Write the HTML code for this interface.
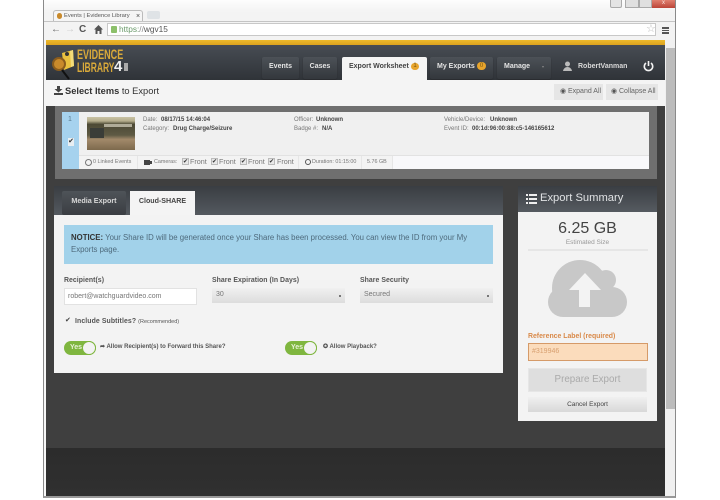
<!DOCTYPE html>
<html><head><meta charset="utf-8"><style>
html,body{margin:0;padding:0;width:720px;height:500px;overflow:hidden;background:#fff;font-family:"Liberation Sans",sans-serif}
div,svg{position:absolute;white-space:nowrap}
#w{left:0;top:0;width:720px;height:500px;filter:blur(.3px)}
.navbtn{height:22px;top:57px;background:linear-gradient(#4c5157,#33373c);color:#e4e4e4;font-size:7px;font-weight:bold;text-align:center;line-height:19px;border-radius:2px;box-shadow:0 1px 1px #2a2c2f}
.lab{color:#777;font-size:6px;line-height:9px}
.val{color:#444;font-size:6px;font-weight:bold;line-height:9px}
.foot{top:156px;height:13px;color:#777;font-size:5.4px;line-height:12px}
.fl{font-size:7.2px;color:#777;top:156px;line-height:12px}
.cb{width:6px;height:6px;background:#e8e8e8;border:1px solid #bbb;top:158px;box-sizing:content-box;color:#333;font-size:6px;line-height:6px;text-align:center;width:5px;height:5px}
.flabel{font-size:6.9px;font-weight:bold;color:#555;letter-spacing:.05px}
.select{top:288px;height:15px;background:linear-gradient(#f0f0f0,#dcdcdc);color:#777;font-size:7px;line-height:13px;padding-left:4px;box-sizing:border-box}
.tog{width:32px;height:14px;background:#7fb63f;border-radius:7px;top:341px;color:#e8f2d8;font-size:7px;font-weight:bold;line-height:14px;text-indent:6px}
.tog i{position:absolute;right:0;top:0;width:12px;height:12px;background:#f2f2f2;border:1px solid #7fb63f;border-radius:50%}
</style></head><body>
<div id="w">
<!-- browser window -->
<div style="left:43px;top:0;width:633px;height:498px;background:linear-gradient(#fdfdfd,#f3f3f3 12px,#f7f7f7);border-left:1px solid #8a8a8a;border-right:1px solid #8a8a8a;border-bottom:2px solid #999;box-sizing:border-box"></div>
<!-- window buttons -->
<div style="left:610px;top:0;width:12px;height:8px;border:1px solid #aaa;border-top:0;background:#e4e4e4;border-radius:0 0 2px 2px;box-sizing:border-box"></div>
<div style="left:625px;top:0;width:14px;height:8px;border:1px solid #aaa;border-top:0;background:#e0e0e0;box-sizing:border-box"></div>
<div style="left:639px;top:0;width:13px;height:8px;border:1px solid #aaa;border-top:0;background:#e0e0e0;box-sizing:border-box"></div>
<div style="left:652px;top:0;width:23px;height:8px;background:linear-gradient(#e08070,#bb4438);color:#f8e0dc;font-size:6px;line-height:7px;text-align:center">x</div>
<!-- tab -->
<div style="left:53px;top:10px;width:90px;height:12px;background:#f5f5f5;border:1px solid #bbb;border-bottom:0;border-radius:3px 3px 0 0;box-sizing:border-box"></div>
<div style="left:57px;top:13px;width:5px;height:6px;background:#c98a2b;border-radius:3px"></div>
<div style="left:64px;top:12px;font-size:5.800px;color:#555;line-height:9px">Events | Evidence Library</div>
<div style="left:136px;top:12px;font-size:7px;color:#444;line-height:9px">×</div>
<div style="left:147px;top:11px;width:13px;height:8px;background:#dfe3e6;border-radius:2px"></div>
<!-- toolbar -->
<div style="left:44px;top:21px;width:631px;height:1px;background:#c4c4c4"></div>
<div style="left:51px;top:24px;font-size:10px;font-weight:bold;color:#666;line-height:11px">←</div>
<div style="left:65px;top:24px;font-size:10px;font-weight:bold;color:#ccc;line-height:11px">→</div>
<div style="left:79px;top:24px;font-size:10px;font-weight:bold;color:#555;line-height:11px">C</div>
<svg style="left:94px;top:25px" width="9" height="9" viewBox="0 0 9 9"><path d="M0 4.500 4.500 0 9 4.500 7.500 4.500V9H5.500V6H3.500V9H1.500V4.500Z" fill="#555"/></svg>
<div style="left:107px;top:23px;width:549px;height:13px;background:#fff;border:1px solid #c8c8c8;box-sizing:border-box"></div>
<div style="left:111px;top:26px;width:6px;height:7px;background:#8cc06a;border-radius:1px"></div>
<div style="left:119px;top:24px;font-size:8.300px;line-height:11px;color:#6a9a6a">https:<span style="color:#888">//</span><span style="color:#555">wgv15</span></div>
<div style="left:646px;top:23px;font-size:11px;line-height:13px;color:#bbb">☆</div>
<div style="left:662px;top:27px;width:7px;height:1.500px;background:#555"></div>
<div style="left:662px;top:29.500px;width:7px;height:1.500px;background:#555"></div>
<div style="left:662px;top:32px;width:7px;height:1.500px;background:#555"></div>
<!-- page -->
<div style="left:46px;top:40px;width:619px;height:5px;background:linear-gradient(#edb92c,#dca21e)"></div>
<div style="left:665px;top:40px;width:10px;height:456px;background:#f0f0f0"></div>
<div style="left:666px;top:48px;width:9px;height:361px;background:#bcbcbc"></div>
<div style="left:46px;top:45px;width:619px;height:35px;background:linear-gradient(#474c53,#2f3338)"></div>
<!-- logo -->
<svg style="left:51px;top:48px" width="26" height="32" viewBox="0 0 26 32"><path d="M11 5 22 2 23 18 13 22Z" fill="#e9c13f"/><path d="M19 3 22 2 23 18 20 19Z" fill="#f3dc7a"/><circle cx="8" cy="16" r="6" fill="#c98a2b" stroke="#8a5c1d" stroke-width="2"/><path d="M11 22 18 31" stroke="#111" stroke-width="2"/><circle cx="16" cy="6" r="2" fill="#333"/></svg>
<div style="left:77px;top:48px;font-size:13.500px;line-height:14px;color:#d9a93a;transform:scaleX(.67);transform-origin:0 0;font-weight:bold">EVIDENCE</div>
<div style="left:77px;top:61px;font-size:13.500px;line-height:14px;color:#d9a93a;transform:scaleX(.63);transform-origin:0 0;font-weight:bold">LIBRARY</div>
<div style="left:114px;top:59px;font-size:15px;line-height:16px;color:#f0f0f0;font-weight:bold">4</div>
<div style="left:124px;top:63px;width:4px;height:8px;background:#aaa"></div>
<!-- nav -->
<div class="navbtn" style="left:262px;width:37px">Events</div>
<div class="navbtn" style="left:303px;width:34px">Cases</div>
<div style="left:342px;top:57px;width:85px;height:23px;background:#f4f4f4;color:#444;font-size:7px;font-weight:bold;line-height:19px;text-indent:7px;border-radius:2px 2px 0 0">Export Worksheet</div>
<div style="left:411px;top:63px;width:8px;height:7px;background:#e8a52c;border-radius:4px;color:#7a5510;font-size:6px;line-height:7px;text-align:center">1</div>
<div class="navbtn" style="left:430px;width:63px;text-align:left;text-indent:7px">My Exports</div>
<div style="left:477px;top:62px;width:9px;height:8px;background:#e8a52c;border-radius:4px;color:#7a5510;font-size:6px;line-height:8px;text-align:center">0</div>
<div class="navbtn" style="left:497px;width:54px;text-align:left;text-indent:7px">Manage</div>
<div style="left:542px;top:66px;width:0;height:0;border:1.500px solid transparent;border-top:2px solid #888"></div>
<svg style="left:563px;top:61px" width="9" height="10" viewBox="0 0 9 10"><circle cx="4.500" cy="3" r="2.500" fill="#bbb"/><path d="M0 10Q1 6 4.500 6T9 10Z" fill="#bbb"/></svg>
<div style="left:578px;top:61px;font-size:7px;font-weight:bold;color:#d8d8d8;line-height:11px">RobertVanman</div>
<svg style="left:643px;top:60px" width="11" height="12" viewBox="0 0 11 12"><path d="M3 3A4.200 4.200 0 1 0 8 3" fill="none" stroke="#f2f2f2" stroke-width="1.600"/><path d="M5.500 1V6" stroke="#f2f2f2" stroke-width="1.600"/></svg>
<!-- select header -->
<div style="left:46px;top:80px;width:619px;height:26px;background:#f4f4f4"></div>
<svg style="left:54px;top:86px" width="9" height="9" viewBox="0 0 9 9"><path d="M3 0H6V3H8.500L4.500 6.500.5 3H3ZM0 7H9V9H0Z" fill="#444"/></svg>
<div style="left:65px;top:85px;font-size:9.300px;color:#333;line-height:12px"><b>Select Items</b> to Export</div>
<div style="left:554px;top:84px;width:49px;height:16px;background:#e6e6e6"></div>
<div style="left:560px;top:84px;color:#555;font-size:7px;line-height:15px">◉</div>
<div style="left:568px;top:84px;color:#666;font-size:7px;line-height:15px">Expand All</div>
<div style="left:606px;top:84px;width:52px;height:16px;background:#e6e6e6"></div>
<div style="left:611px;top:84px;color:#555;font-size:7px;line-height:15px">◉</div>
<div style="left:619px;top:84px;color:#666;font-size:7px;line-height:15px">Collapse All</div>
<!-- content bg -->
<div style="left:46px;top:106px;width:619px;height:342px;background:#3f3f3f"></div>
<div style="left:46px;top:448px;width:619px;height:48px;background:linear-gradient(#2c2c2c,#303030)"></div>
<div style="left:55px;top:106px;width:602px;height:73px;background:#6f6f6f"></div>
<div style="left:62px;top:112px;width:587px;height:57px;background:#f0f0f0"></div>
<div style="left:62px;top:112px;width:17px;height:57px;background:#a6d2ee"></div>
<div style="left:68px;top:116px;font-size:7px;color:#5a7a90;line-height:8px">1</div>
<div style="left:68px;top:138px;font-size:7px;line-height:8px;color:#333;width:6px;height:8px;background:#e8eef2;text-align:center">✔</div>
<!-- thumbnail -->
<div style="left:87px;top:117px;width:48px;height:33px;background:linear-gradient(#c9c3a4 0,#b5ad8c 12%,#4d4a35 22%,#5e5a44 55%,#a2896a 68%,#7d6a4d 100%)"></div>
<div style="left:90px;top:128px;width:14px;height:10px;background:#3a3d38"></div>
<div style="left:104px;top:124px;width:28px;height:3px;background:#b0ac98"></div>
<div class="lab" style="left:143px;top:116px">Date:</div><div class="val" style="left:161px;top:116px">08/17/15 14:46:04</div>
<div class="lab" style="left:143px;top:125px">Category:</div><div class="val" style="left:173px;top:125px">Drug Charge/Seizure</div>
<div class="lab" style="left:294px;top:116px">Officer:</div><div class="val" style="left:316px;top:116px">Unknown</div>
<div class="lab" style="left:294px;top:125px">Badge #:</div><div class="val" style="left:322px;top:125px">N/A</div>
<div class="lab" style="left:444px;top:116px">Vehicle/Device:</div><div class="val" style="left:490px;top:116px">Unknown</div>
<div class="lab" style="left:444px;top:125px">Event ID:</div><div class="val" style="left:472px;top:125px">00:1d:96:00:88:c5-146165612</div>
<!-- footer strip -->
<div style="left:79px;top:156px;width:570px;height:13px;background:#f8f8fa"></div>
<div style="left:79px;top:155px;width:570px;height:1px;background:#e2e2e2"></div>
<div style="left:79px;top:156px;width:314px;height:13px;background:#f3f3f3"></div>
<div style="left:137px;top:156px;width:1px;height:13px;background:#e6e6e6"></div>
<div style="left:298px;top:156px;width:1px;height:13px;background:#e6e6e6"></div>
<div style="left:361px;top:156px;width:1px;height:13px;background:#e6e6e6"></div>
<div style="left:392px;top:156px;width:1px;height:13px;background:#e6e6e6"></div>
<div style="left:85px;top:159px;width:5px;height:5px;border:1px solid #777;border-radius:50%"></div>
<div class="foot" style="left:93px">0 Linked Events</div>
<div style="left:144px;top:160px;width:6px;height:5px;background:#444"></div>
<div style="left:150px;top:161px;width:2px;height:3px;background:#444"></div>
<div class="foot" style="left:154px">Cameras:</div>
<div class="cb" style="left:182px">✔</div><div class="fl" style="left:190px">Front</div>
<div class="cb" style="left:211px">✔</div><div class="fl" style="left:219px">Front</div>
<div class="cb" style="left:240px">✔</div><div class="fl" style="left:248px">Front</div>
<div class="cb" style="left:268px">✔</div><div class="fl" style="left:277px">Front</div>
<div style="left:305px;top:159px;width:4px;height:4px;border:1px solid #555;border-radius:50%"></div>
<div class="foot" style="left:312px">Duration: 01:15:00</div>
<div class="foot" style="left:367px">5.76 GB</div>
<!-- left panel -->
<div style="left:54px;top:186px;width:449px;height:30px;background:linear-gradient(#3a3e43,#555a60)"></div>
<div style="left:62px;top:191px;width:64px;height:24px;background:linear-gradient(#4e5358,#3a3d42);color:#d8d8d8;font-size:7.200px;font-weight:bold;line-height:20px;text-align:center;border-radius:2px">Media Export</div>
<div style="left:130px;top:191px;width:65px;height:24px;background:#f4f4f4;color:#444;font-size:7.100px;font-weight:bold;line-height:20px;text-align:center">Cloud-SHARE</div>
<div style="left:54px;top:215px;width:449px;height:158px;background:#f3f3f3"></div>
<div style="left:64px;top:225px;width:429px;height:39px;background:#a2d2ea"></div>
<div style="left:71px;top:232px;width:410px;font-size:7.800px;line-height:12px;color:#4e6a7c;white-space:normal"><b style="color:#333">NOTICE:</b> Your Share ID will be generated once your Share has been processed. You can view the ID from your My<br>Exports page.</div>
<div class="flabel" style="left:64px;top:277px">Recipient(s)</div>
<div style="left:64px;top:288px;width:133px;height:17px;background:#fff;border:1px solid #e2e2e2;box-sizing:border-box;color:#777;font-size:7px;line-height:15px;padding-left:3px">robert@watchguardvideo.com</div>
<div class="flabel" style="left:212px;top:277px">Share Expiration (In Days)</div>
<div class="select" style="left:212px;width:133px">30</div>
<div style="left:339px;top:295px;width:2px;height:2px;background:#777"></div>
<div class="flabel" style="left:360px;top:277px">Share Security</div>
<div class="select" style="left:360px;width:133px">Secured</div>
<div style="left:487px;top:295px;width:2px;height:2px;background:#777"></div>
<div style="left:65px;top:317px;font-size:7px;line-height:8px;color:#444">✔</div>
<div class="flabel" style="left:75px;top:317px;line-height:10px;letter-spacing:.1px">Include Subtitles? <span style="font-size:5.500px;font-weight:normal;letter-spacing:0">(Recommended)</span></div>
<div class="tog" style="left:64px">Yes<i></i></div>
<div style="left:100px;top:342px;font-size:6px;font-weight:bold;color:#555;line-height:10px">➦ Allow Recipient(s) to Forward this Share?</div>
<div class="tog" style="left:285px">Yes<i></i></div>
<div style="left:323px;top:342px;font-size:6px;font-weight:bold;color:#555;line-height:10px">✪ Allow Playback?</div>
<!-- right panel -->
<div style="left:518px;top:186px;width:139px;height:27px;background:linear-gradient(#3a3e43,#575c62)"></div>
<div style="left:526px;top:194px;width:2px;height:2px;background:#eee;box-shadow:0 4px #eee,0 8px #eee"></div>
<div style="left:529px;top:194px;width:8px;height:2px;background:#eee;box-shadow:0 4px #eee,0 8px #eee"></div>
<div style="left:540px;top:191px;font-size:11.200px;line-height:15px;color:#e0e2e4">Export Summary</div>
<div style="left:518px;top:212px;width:139px;height:209px;background:#f3f3f3"></div>
<div style="left:518px;top:220px;width:139px;text-align:center;font-size:16px;line-height:18px;color:#444">6.25 GB</div>
<div style="left:518px;top:239px;width:139px;text-align:center;font-size:6.500px;line-height:8px;color:#999">Estimated Size</div>
<div style="left:528px;top:249px;width:120px;height:2px;background:#e6e6e6"></div>
<svg style="left:547px;top:259px" width="80" height="60" viewBox="0 0 80 60"><g fill="#c8c8c8"><circle cx="33" cy="29" r="28"/><circle cx="59" cy="21" r="10"/><rect x="1" y="28" width="79" height="30" rx="15"/></g><path d="M38 14 54 31H43V48H32V31H22Z" fill="#f3f3f3"/></svg>
<div style="left:528px;top:332px;font-size:6.900px;font-weight:bold;line-height:10px;color:#d98a4a">Reference Label (required)</div>
<div style="left:528px;top:343px;width:120px;height:18px;background:#fbdcbc;border:1px solid #d59a68;box-sizing:border-box;color:#d8a070;font-size:7px;line-height:16px;padding-left:3px">#319946</div>
<div style="left:528px;top:368px;width:119px;height:24px;background:#dedede;border:1px solid #e6e6e6;box-sizing:border-box;color:#aaa;font-size:9.800px;line-height:22px;text-align:center">Prepare Export</div>
<div style="left:528px;top:397px;width:119px;height:15px;background:linear-gradient(#f0f0f0,#d8d8d8);color:#444;font-size:6.500px;line-height:15px;text-align:center">Cancel Export</div>
</div>
</body></html>
